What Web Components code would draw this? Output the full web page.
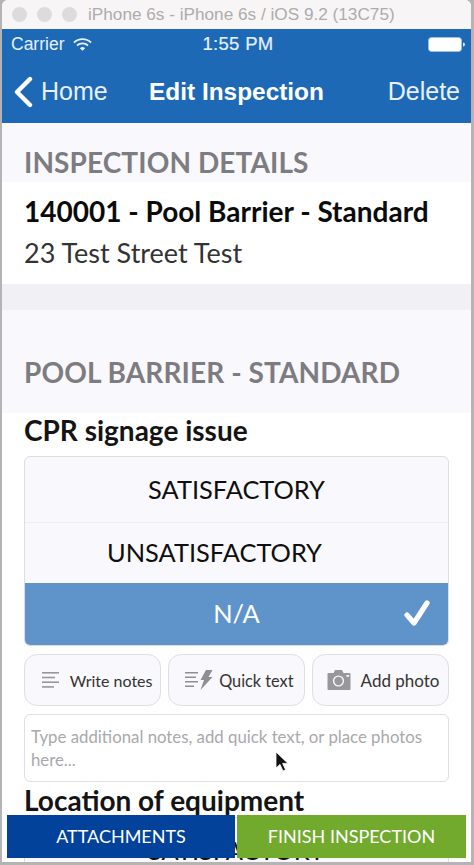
<!DOCTYPE html>
<html>
<head>
<meta charset="utf-8">
<title>Edit Inspection</title>
<style>
    html, body { margin: 0; height: 865px; overflow: hidden; background: #b4b4b4; }
    body { font-family: Lato, "Open Sans", sans-serif; }
</style>
</head>
<body>
<sim-window>
    <sim-status></sim-status>
    <nav-bar></nav-bar>
    <section-head>INSPECTION DETAILS</section-head>
    <detail-card name="140001 - Pool Barrier - Standard" address="23 Test Street Test"></detail-card>
    <div style="height:26px;background:#f1f0f5"></div>
    <section-head tall>POOL BARRIER - STANDARD</section-head>
    <inspection-item label="CPR signage issue"></inspection-item>
    <item-label>Location of equipment</item-label>
    <seg-control></seg-control>
    <bottom-bar></bottom-bar>
    <mouse-cursor></mouse-cursor>
</sim-window>

<script>
class SimWindow extends HTMLElement {
    constructor() {
        super();
        this.attachShadow({mode: 'open'});
        this.shadowRoot.innerHTML = `
            <style>
                :host {
                    display: block;
                    position: relative;
                    box-sizing: border-box;
                    width: 469px;
                    height: 862px;
                    margin-left: 2px;
                    background: #fff;
                    overflow: hidden;
                    border-radius: 6px 6px 0 0;
                }
                .title {
                    height: 29px;
                    display: flex;
                    align-items: center;
                    background: #f7f5f5;
                    padding-left: 10px;
                }
                .light {
                    width: 15px;
                    height: 15px;
                    border-radius: 50%;
                    background: #dcdcdc;
                    margin-right: 10px;
                }
                .name {
                    font: 17.2px "Liberation Sans", sans-serif;
                    color: #aeacac;
                    margin-left: 1px;
                    white-space: nowrap;
                }
            </style>
            <div class="title">
                <div class="light"></div>
                <div class="light"></div>
                <div class="light"></div>
                <div class="name">iPhone 6s - iPhone 6s / iOS 9.2 (13C75)</div>
            </div>
            <slot></slot>
        `;
    }
}

class SimStatus extends HTMLElement {
    constructor() {
        super();
        this.attachShadow({mode: 'open'});
        this.shadowRoot.innerHTML = `
            <style>
                :host {
                    display: grid;
                    grid-template-columns: 1fr auto 1fr;
                    align-items: center;
                    height: 30px;
                    padding: 0 6px 0 9px;
                    background: #1d69b5;
                    color: #e6f0fa;
                    font: 17.5px "Liberation Sans", sans-serif;
                }
                .left { display: flex; align-items: center; gap: 9px; }
                .right { display: flex; justify-content: flex-end; }
                .time { font-size: 18.5px; letter-spacing: 0.3px; -webkit-text-stroke: 0.2px #e6f0fa; }
                svg { display: block; }
            </style>
            <div class="left">
                <span>Carrier</span>
                <svg width="19" height="15" viewBox="0 0 20 15">
                    <path d="M1 5.500a13 13 0 0 1 18 0" fill="none" stroke="#e6f0fa" stroke-width="2"/>
                    <path d="M4.200 8.600a8.400 8.400 0 0 1 11.600 0" fill="none" stroke="#e6f0fa" stroke-width="2"/>
                    <path d="M7.200 11.400a4 4 0 0 1 5.600 0L10 14.200z" fill="#e6f0fa"/>
                </svg>
            </div>
            <span class="time">1:55 PM</span>
            <div class="right">
                <svg width="37" height="15" viewBox="0 0 37 15">
                    <rect x="0.500" y="0.500" width="33" height="14" rx="3" fill="#fff" stroke="#9cc0e6"/>
                    <path d="M35 5.500a2 2 0 0 1 0 4z" fill="#dbe8f6"/>
                </svg>
            </div>
        `;
    }
}

class NavBar extends HTMLElement {
    constructor() {
        super();
        this.attachShadow({mode: 'open'});
        this.shadowRoot.innerHTML = `
            <style>
                :host {
                    display: grid;
                    grid-template-columns: 1fr auto 1fr;
                    align-items: center;
                    height: 64px;
                    padding: 1px 11px 0 11px;
                    box-sizing: border-box;
                    background: #1d69b5;
                    color: #fff;
                    font: 25px "Liberation Sans", sans-serif;
                }
                .back { display: flex; align-items: center; gap: 8px; color: #e8f1fb; }
                .title { font-weight: 700; font-size: 24.4px; }
                .right { text-align: right; color: #e8f1fb; }
                svg { display: block; }
            </style>
            <div class="back">
                <svg width="20" height="32" viewBox="0 0 20 32">
                    <path d="M17 3L4 16l13 13" fill="none" stroke="#fff" stroke-width="4.400" stroke-linecap="round" stroke-linejoin="round"/>
                </svg>
                <span>Home</span>
            </div>
            <div class="title">Edit Inspection</div>
            <div class="right">Delete</div>
        `;
    }
}

class SectionHead extends HTMLElement {
    constructor() {
        super();
        this.attachShadow({mode: 'open'});
        this.shadowRoot.innerHTML = `
            <style>
                :host {
                    display: flex;
                    align-items: flex-end;
                    box-sizing: border-box;
                    height: 59px;
                    padding: 0 22px 3px;
                    background: #f9f8fc;
                    color: #7d7c81;
                    font: 700 28px Lato, sans-serif;
                    letter-spacing: 0.1px;
                }
                :host([tall]) { height: 103px; padding-bottom: 24px; }
            </style>
            <slot></slot>
        `;
    }
}

class DetailCard extends HTMLElement {
    constructor() {
        super();
        this.attachShadow({mode: 'open'});
        const name = this.getAttribute('name') || '';
        const address = this.getAttribute('address') || '';
        this.shadowRoot.innerHTML = `
            <style>
                :host {
                    display: block;
                    box-sizing: border-box;
                    height: 102px;
                    padding: 12px 22px 0;
                    background: #fff;
                }
                .name { font: 700 28px/34px Lato, sans-serif; color: #0b0b0b; }
                .address { font: 400 27px/34px Lato, sans-serif; color: #333; margin-top: 8px; }
            </style>
            <div class="name">${name}</div>
            <div class="address">${address}</div>
        `;
    }
}

class ItemLabel extends HTMLElement {
    constructor() {
        super();
        this.attachShadow({mode: 'open'});
        this.shadowRoot.innerHTML = `
            <style>
                :host {
                    display: block;
                    padding: 0 22px;
                    font: 700 28px/34px Lato, sans-serif;
                    color: #141414;
                    background: #fff;
                }
            </style>
            <slot></slot>
        `;
    }
}

class SegControl extends HTMLElement {
    constructor() {
        super();
        this.attachShadow({mode: 'open'});
        this.shadowRoot.innerHTML = `
            <style>
                :host {
                    display: block;
                    box-sizing: border-box;
                    width: 425px;
                    margin-left: 22px;
                    border: 1px solid #dedde2;
                    border-radius: 6px;
                    background: #f9f8fc;
                    overflow: hidden;
                    color: #0f0f0f;
                    font: 400 25.4px Lato, sans-serif;
                }
                .row {
                    display: flex;
                    align-items: center;
                    justify-content: center;
                    position: relative;
                    height: 61px;
                    padding-bottom: 2px;
                    box-sizing: border-box;
                }
                .first { height: 66px; border-bottom: 1px solid #eeedf1; }
                .second { height: 60px; padding-right: 44px; }
                .on { height: 62px; background: #5f94ca; color: #fff; }
                .check { position: absolute; right: 18px; top: 17px; }
            </style>
            <div class="row first">SATISFACTORY</div>
            <div class="row second">UNSATISFACTORY</div>
            <div class="row on">N/A
                <svg class="check" width="26" height="27" viewBox="0 0 26 27">
                    <path d="M3 15l7 8L23 3" fill="none" stroke="#fff" stroke-width="5.200" stroke-linecap="round" stroke-linejoin="round"/>
                </svg>
            </div>
        `;
    }
}

class ActionButton extends HTMLElement {
    constructor() {
        super();
        this.attachShadow({mode: 'open'});
        this.shadowRoot.innerHTML = `
            <style>
                :host {
                    display: flex;
                    align-items: center;
                    justify-content: flex-end;
                    gap: var(--gap, 10px);
                    box-sizing: border-box;
                    height: 52px;
                    padding-right: var(--pad, 7px);
                    border: 1px solid #dfdee2;
                    border-radius: 13px;
                    background: #f9f8fc;
                    color: #333;
                    font: 400 var(--size, 16px) Lato, sans-serif;
                    white-space: nowrap;
                }
            </style>
            <slot name="icon"></slot>
            <slot></slot>
        `;
    }
}

class NotesBox extends HTMLElement {
    constructor() {
        super();
        this.attachShadow({mode: 'open'});
        this.shadowRoot.innerHTML = `
            <style>
                :host {
                    display: block;
                    box-sizing: border-box;
                    height: 68px;
                    padding: 10px 6px 0;
                    border: 1px solid #dfdee2;
                    border-radius: 6px;
                    background: #fff;
                    color: #a9a8ac;
                    font: 400 16.800px/23px Lato, sans-serif;
                }
            </style>
            <slot></slot>
        `;
    }
}

class InspectionItem extends HTMLElement {
    constructor() {
        super();
        this.attachShadow({mode: 'open'});
        const label = this.getAttribute('label') || '';
        this.shadowRoot.innerHTML = `
            <style>
                :host { display: block; background: #fff; padding-bottom: 1px; }
                .buttons {
                    display: grid;
                    grid-template-columns: 136.500px 136.500px 136.500px;
                    gap: 7.500px;
                    margin: 8px 0 0 22px;
                }
                notes-box { margin: 8px 0 0 22px; width: 425px; }
                item-label { margin-bottom: 9px; }
                svg { display: block; }
            </style>
            <item-label>${label}</item-label>
            <seg-control></seg-control>
            <div class="buttons">
                <action-button style="--pad:7px;--gap:10px">
                    <svg slot="icon" width="18" height="18" viewBox="0 0 18 18" fill="#98979b">
                        <rect x="0" y="1" width="17" height="1.600"/>
                        <rect x="0" y="5.700" width="13" height="1.600"/>
                        <rect x="0" y="10.400" width="17" height="1.600"/>
                        <rect x="0" y="15.100" width="12" height="1.600"/>
                    </svg>
                    Write notes
                </action-button>
                <action-button style="--pad:10px;--gap:6px;--size:16.300px">
                    <svg slot="icon" width="28" height="20" viewBox="0 0 28 20" fill="#8f8e92">
                        <rect x="0" y="2" width="13" height="1.500"/>
                        <rect x="0" y="6.500" width="11" height="1.500"/>
                        <rect x="0" y="11" width="13" height="1.500"/>
                        <rect x="0" y="15.500" width="9" height="1.500"/>
                        <path d="M21 0h6.500l-4 7h4L15.500 20l3.500-10h-3.500z"/>
                    </svg>
                    Quick text
                </action-button>
                <action-button style="--pad:8px;--gap:10px;--size:17px">
                    <svg slot="icon" width="24" height="20" viewBox="0 0 24 20">
                        <path d="M1.500 3h5l1.500-3h7l1.500 3h6a1 1 0 0 1 1 1v15a1 1 0 0 1-1 1H1.500a1 1 0 0 1-1-1V4a1 1 0 0 1 1-1z" fill="#98979b"/>
                        <circle cx="11.500" cy="11" r="5.600" fill="#f9f8fc"/>
                        <circle cx="11.500" cy="11" r="4.200" fill="#98979b"/>
                        <rect x="19.500" y="5" width="2.600" height="1.800" fill="#f9f8fc"/>
                    </svg>
                    Add photo
                </action-button>
            </div>
            <notes-box>Type additional notes, add quick text, or place photos here...</notes-box>
        `;
    }
}

class BottomBar extends HTMLElement {
    constructor() {
        super();
        this.attachShadow({mode: 'open'});
        this.shadowRoot.innerHTML = `
            <style>
                :host {
                    position: absolute;
                    left: 5px;
                    top: 815px;
                    width: 459px;
                    height: 43px;
                    display: grid;
                    grid-template-columns: 228px 229px;
                    gap: 2px;
                    color: #fff;
                    font: 400 18px Lato, sans-serif;
                }
                div { display: flex; align-items: center; justify-content: center; padding-bottom: 2px; box-sizing: border-box; }
                .attach { background: #02429a; }
                .finish { background: #72aa2e; }
            </style>
            <div class="attach">ATTACHMENTS</div>
            <div class="finish">FINISH INSPECTION</div>
        `;
    }
}

class MouseCursor extends HTMLElement {
    constructor() {
        super();
        this.attachShadow({mode: 'open'});
        this.shadowRoot.innerHTML = `
            <style>
                :host { position: absolute; left: 273px; top: 751px; display: block; }
                svg { display: block; }
            </style>
            <svg width="14" height="22" viewBox="0 0 14 22">
                <path d="M1 1v16l4-3.600 3 6.600 2.600-1.200-3-6.400h5.400z" fill="#111" stroke="#fff" stroke-width="0.800"/>
            </svg>
        `;
    }
}

customElements.define('sim-window', SimWindow);
customElements.define('sim-status', SimStatus);
customElements.define('nav-bar', NavBar);
customElements.define('section-head', SectionHead);
customElements.define('detail-card', DetailCard);
customElements.define('item-label', ItemLabel);
customElements.define('seg-control', SegControl);
customElements.define('action-button', ActionButton);
customElements.define('notes-box', NotesBox);
customElements.define('inspection-item', InspectionItem);
customElements.define('bottom-bar', BottomBar);
customElements.define('mouse-cursor', MouseCursor);
</script>
</body>
</html>
